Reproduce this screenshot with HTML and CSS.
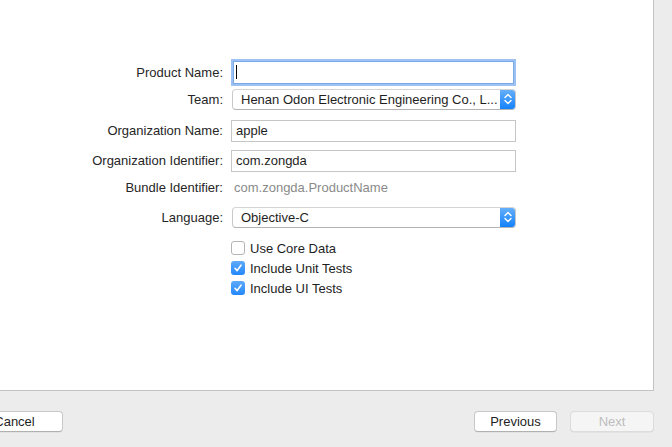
FILE: index.html
```html
<!DOCTYPE html>
<html>
<head>
<meta charset="utf-8">
<link rel="stylesheet" href="styles.css">
</head>
<body>
<div class="panel">
  <div class="form">
    <div class="row r-product">
      <label class="label">Product Name:</label>
      <div class="field focus"><span class="caret"></span></div>
    </div>
    <div class="row r-team">
      <label class="label">Team:</label>
      <div class="popup">
        <span class="popup-text">Henan Odon Electronic Engineering Co., L...</span>
        <span class="stepper"><svg width="8" height="12" viewBox="0 0 8 12"><path d="M1 4.5 L4 1.5 L7 4.5 M1 7.5 L4 10.5 L7 7.5" fill="none" stroke="#fff" stroke-width="1.4" stroke-linecap="round" stroke-linejoin="round"/></svg></span>
      </div>
    </div>
    <div class="row r-orgname">
      <label class="label">Organization Name:</label>
      <div class="field">apple</div>
    </div>
    <div class="row r-orgid">
      <label class="label">Organization Identifier:</label>
      <div class="field">com.zongda</div>
    </div>
    <div class="row r-bundle">
      <label class="label">Bundle Identifier:</label>
      <div class="static">com.zongda.ProductName</div>
    </div>
    <div class="row r-lang">
      <label class="label">Language:</label>
      <div class="popup">
        <span class="popup-text">Objective-C</span>
        <span class="stepper"><svg width="8" height="12" viewBox="0 0 8 12"><path d="M1 4.5 L4 1.5 L7 4.5 M1 7.5 L4 10.5 L7 7.5" fill="none" stroke="#fff" stroke-width="1.4" stroke-linecap="round" stroke-linejoin="round"/></svg></span>
      </div>
    </div>
    <div class="row r-check first">
      <span class="label"></span>
      <div class="check"><span class="box"></span><span>Use Core Data</span></div>
    </div>
    <div class="row r-check">
      <span class="label"></span>
      <div class="check"><span class="box on"><svg width="10" height="10" viewBox="0 0 10 10"><path d="M2 5.3 L4.1 7.6 L8 2.2" fill="none" stroke="#fff" stroke-width="1.6" stroke-linecap="round" stroke-linejoin="round"/></svg></span><span>Include Unit Tests</span></div>
    </div>
    <div class="row r-check">
      <span class="label"></span>
      <div class="check"><span class="box on"><svg width="10" height="10" viewBox="0 0 10 10"><path d="M2 5.3 L4.1 7.6 L8 2.2" fill="none" stroke="#fff" stroke-width="1.6" stroke-linecap="round" stroke-linejoin="round"/></svg></span><span>Include UI Tests</span></div>
    </div>
  </div>
</div>
<div class="buttons">
  <button class="btn cancel">Cancel</button>
  <div class="spacer"></div>
  <button class="btn">Previous</button>
  <button class="btn disabled">Next</button>
</div>
</body>
</html>
```
FILE: styles.css
```css
html, body {
  margin: 0;
  padding: 0;
}
body {
  background: #ececec;
  width: 672px;
  height: 447px;
  overflow: hidden;
  font-family: "Liberation Sans", Arial, sans-serif;
  font-size: 13px;
  color: #262626;
}
.panel {
  width: 653px;
  height: 390px;
  background: #fff;
  border-right: 1px solid #c3c3c3;
  border-bottom: 1px solid #c3c3c3;
  box-sizing: content-box;
  overflow: hidden;
}
.form {
  padding-top: 60px;
  display: flex;
  flex-direction: column;
}
.row {
  display: flex;
  align-items: center;
}
.label {
  width: 223px;
  text-align: right;
  margin-right: 8px;
  flex: none;
}
.r-product { height: 24px; }
.r-team { height: 22px; margin-top: 4px; }
.r-orgname { height: 23px; margin-top: 9px; }
.r-orgid { height: 23px; margin-top: 7px; }
.r-bundle { height: 20px; margin-top: 5px; }
.r-lang { height: 22px; margin-top: 9px; }
.r-check { height: 20px; }
.r-check.first { margin-top: 10px; }

.field {
  width: 285px;
  height: 22px;
  box-sizing: border-box;
  border: 1px solid #c6c6c6;
  background: #fff;
  padding: 0 0 0 4px;
  line-height: 20px;
  color: #1e1e1e;
}
.field.focus {
  height: 23px;
  border: 1px solid #7aa9e8;
  box-shadow: 0 0 0 2px #9cc1f2;
  width: 281px;
  margin-left: 2px;
  padding-left: 2px;
  display: flex;
  align-items: center;
}
.caret {
  display: inline-block;
  width: 1px;
  height: 14px;
  background: #000;
}
.static {
  color: #8a8a8a;
  padding-left: 3px;
}
.popup {
  width: 284px;
  height: 21px;
  box-sizing: border-box;
  border: 1px solid #c9c9c9;
  border-top-color: #d4d4d4;
  border-bottom-color: #b3b3b3;
  border-radius: 4px;
  background: #fff;
  display: flex;
  align-items: center;
  overflow: hidden;
  margin-left: 1px;
}
.popup-text {
  flex: 1;
  padding-left: 8px;
  white-space: nowrap;
  overflow: hidden;
  color: #1e1e1e;
}
.stepper {
  width: 16px;
  height: 21px;
  margin: -1px -1px -1px 0;
  background: linear-gradient(#69b1fa, #0f7ffb);
  border-radius: 0 4px 4px 0;
  display: flex;
  align-items: center;
  justify-content: center;
}
.check {
  display: flex;
  align-items: center;
  color: #1e1e1e;
}
.box {
  width: 14px;
  height: 14px;
  box-sizing: border-box;
  border: 1px solid #b5b5b5;
  border-radius: 3px;
  background: #fff;
  margin-right: 5px;
  display: flex;
  align-items: center;
  justify-content: center;
}
.box.on {
  border: none;
  background: linear-gradient(#5eaaf9, #2387fb);
}
.buttons {
  display: flex;
  align-items: center;
  padding-top: 20px;
  width: 654px;
}
.spacer { flex: 1; }
.btn {
  font-family: "Liberation Sans", Arial, sans-serif;
  font-size: 13px;
  color: #1e1e1e;
  height: 21px;
  box-sizing: border-box;
  border: 1px solid #c8c8c8;
  border-bottom-color: #b0b0b0;
  border-radius: 4px;
  background: #fff;
  padding: 0;
  width: 83px;
  box-shadow: 0 0.5px 0.5px rgba(0,0,0,0.08);
}
.btn.cancel {
  margin-left: -34px;
  width: 97px;
}
.btn + .btn { margin-left: 13px; }
.btn.disabled {
  width: 84px;
  color: #bdbdbd;
  background: #f5f5f5;
  border-color: #dcdcdc;
}
```
